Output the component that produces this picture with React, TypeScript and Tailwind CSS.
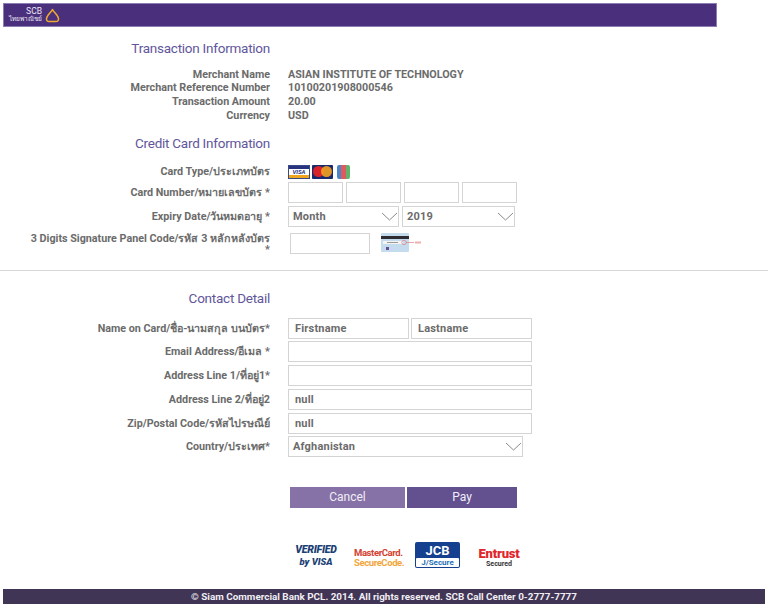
import { ReactNode } from 'react';

const font = { fontFamily: 'Roboto, "Noto Sans", "DejaVu Sans", sans-serif' };

function Heading({ children, className }: { children: ReactNode; className: string }) {
  return <h2 className={`w-[270px] text-right text-[13.5px] leading-[20px] font-normal tracking-[-0.25px] text-[#62569b] ${className}`}>{children}</h2>;
}

function Row({ label, children, className = '' }: { label: ReactNode; children?: ReactNode; className?: string }) {
  return (
    <div className={`flex items-center gap-[18px] ${className}`}>
      <label className="w-[270px] shrink-0 text-right text-[10.75px] leading-[11px] font-bold text-[#6b6b6b]">{label}</label>
      {children}
    </div>
  );
}

function Field({ value = '', className }: { value?: string; className: string }) {
  return (
    <input
      readOnly
      value={value}
      className={`h-[21px] border border-[#d4d4d4] bg-white px-[6px] text-[11px] font-bold tracking-[0.2px] text-[#6b6b6b] outline-none ${className}`}
    />
  );
}

function Select({ value, className }: { value: string; className: string }) {
  return (
    <div className={`relative flex h-[21px] items-center border border-[#d4d4d4] bg-white pt-[1px] pl-[4px] text-[11px] font-bold tracking-[0.2px] text-[#6b6b6b] ${className}`}>
      {value}
      <svg className="absolute top-[5px] right-0" width="17" height="9" viewBox="0 0 17 9" fill="none">
        <path d="M1 1l7.5 7L16 1" stroke="#8a8a8a" strokeWidth="1" />
      </svg>
    </div>
  );
}

function InfoRow({ label, value }: { label: string; value: string }) {
  return (
    <div className="flex h-[13.7px] items-center gap-[18px] text-[10.75px] font-bold text-[#6b6b6b]">
      <span className="w-[270px] text-right">{label}</span>
      <span>{value}</span>
    </div>
  );
}

function CardIcons() {
  return (
    <div className="flex items-center gap-[2px]">
      <div className="flex h-[14px] w-[22px] flex-col border border-[#3b4a86] bg-white">
        <div className="h-[3px] bg-[#27337f]" />
        <div className="flex-1 text-center text-[6px] leading-[6px] font-bold text-[#27337f] italic">VISA</div>
        <div className="h-[3px] bg-[#eda51f]" />
      </div>
      <div className="relative h-[14px] w-[21px] rounded-[1px] bg-[#1b2a6b]">
        <div className="absolute top-[1.5px] left-[1px] size-[11px] rounded-full bg-[#d8232a]" />
        <div className="absolute top-[1.5px] right-[1px] size-[11px] rounded-full bg-[#f4a11f] opacity-90" />
      </div>
      <div className="ml-[2px] flex h-[14px] w-[13px] overflow-hidden rounded-[2px]">
        <div className="flex-1 bg-[#4a86c5]" />
        <div className="flex-1 bg-[#de5a60]" />
        <div className="flex-1 bg-[#5fb36b]" />
      </div>
    </div>
  );
}

function CardBack() {
  return (
    <svg width="46" height="20" viewBox="0 0 46 20" className="ml-[11px]">
      <rect x="0" y="0" width="28" height="19" rx="1" fill="#c5dcef" />
      <rect x="0" y="3" width="28" height="3" fill="#2d2d33" />
      <rect x="2" y="8" width="20" height="3" fill="#f4f4f4" />
      <rect x="6" y="9" width="11" height="1" fill="#9a9a9a" />
      <rect x="5" y="14" width="3" height="3" fill="#6a4a9c" />
      <circle cx="23" cy="9.500" r="2.200" fill="none" stroke="#e28080" strokeWidth="0.7" />
      <path d="M25 9.500h8" stroke="#e28080" strokeWidth="0.7" />
      <rect x="34" y="8.500" width="6" height="2" fill="#eeb0b0" />
    </svg>
  );
}

function TrustLogos() {
  return (
    <div className="mt-[34px] ml-[294px] flex h-[26px] items-center">
      <div className="w-[44px] text-center font-black text-[#1c3f75] italic">
        <div className="text-[10.5px] leading-[13px] tracking-[-0.2px]">VERIFIED</div>
        <div className="text-[9.5px] leading-[11px]">by VISA</div>
      </div>
      <div className="ml-[16px] w-[44px] pt-[5px] text-center text-[9.5px] leading-[10px] font-bold tracking-[-0.4px] whitespace-nowrap">
        <div className="text-[#d3402f]">MasterCard.</div>
        <div className="text-[#f2a63c]">SecureCode.</div>
      </div>
      <div className="ml-[17px] flex h-[26px] w-[45px] flex-col rounded-[2px] bg-[#14408f] p-[1px] text-center font-bold">
        <div className="text-[13px] leading-[15px] text-white">JCB</div>
        <div className="flex-1 rounded-[1px] bg-white text-[8px] leading-[9px] text-[#1e6fb8]">J/Secure</div>
      </div>
      <div className="ml-[17px] w-[44px] pt-[5px] text-center">
        <div className="text-[13px] leading-[13px] font-black tracking-[-0.2px] text-[#e0252b]">Entrust</div>
        <div className="text-[7px] leading-[8px] font-bold text-[#333]">Secured</div>
      </div>
    </div>
  );
}

export default function App() {
  return (
    <div className="h-[607px] w-[768px] overflow-hidden bg-white pt-[3px]" style={font}>
      <header className="mx-[3px] flex h-[24px] w-[714px] items-center border border-[#8d7db5] bg-[#4a2f7d] pl-[3px]">
        <div className="ml-[2px] text-right leading-none text-[#ece8f3]">
          <div className="text-[8.5px] leading-[8px]">SCB</div>
          <div className="text-[6.5px] leading-[8px]">ไทยพาณิชย์</div>
        </div>
        <svg width="15" height="15" viewBox="0 0 15 15" fill="none" className="ml-[3px]">
          <path d="M7.5 1.500C6.500 4 2 7 1.500 10.500 1.200 12.500 2.500 13.500 4 13.500h7c1.500 0 2.800-1 2.500-3C13 7 8.500 4 7.500 1.500Z" stroke="#ecaa30" strokeWidth="1.500" strokeLinejoin="round" />
        </svg>
      </header>

      <Heading className="mt-[11px]">Transaction Information</Heading>
      <div className="mt-[10px]">
        <InfoRow label="Merchant Name" value="ASIAN INSTITUTE OF TECHNOLOGY" />
        <InfoRow label="Merchant Reference Number" value="10100201908000546" />
        <InfoRow label="Transaction Amount" value="20.00" />
        <InfoRow label="Currency" value="USD" />
      </div>

      <Heading className="mt-[10px]">Credit Card Information</Heading>
      <Row label="Card Type/ประเภทบัตร" className="mt-[12px] h-[14px]">
        <CardIcons />
      </Row>
      <Row label="Card Number/หมายเลขบัตร *" className="mt-[3px]">
        <div className="flex gap-[3px]">
          <Field className="w-[55px]" />
          <Field className="w-[55px]" />
          <Field className="w-[55px]" />
          <Field className="w-[55px]" />
        </div>
      </Row>
      <Row label="Expiry Date/วันหมดอายุ *" className="mt-[3px]">
        <div className="flex gap-[3px]">
          <Select value="Month" className="w-[111px]" />
          <Select value="2019" className="w-[113px]" />
        </div>
      </Row>
      <div className="mt-[6px] flex items-start gap-[18px]">
        <label className="ml-[28px] w-[242px] shrink-0 text-right text-[10.75px] leading-[11px] font-bold text-[#6b6b6b]">
          3 Digits Signature Panel Code/รหัส 3 หลักหลังบัตร *
        </label>
        <div className="flex items-start">
          <Field className="ml-[2px] w-[80px]" />
          <CardBack />
        </div>
      </div>

      <hr className="mt-[15px] border-[#d9d9d9]" />

      <Heading className="mt-[17px]">Contact Detail</Heading>
      <div className="mt-[10px] flex flex-col gap-[2.7px]">
        <Row label="Name on Card/ชื่อ-นามสกุล บนบัตร*">
          <div className="flex gap-[2px]">
            <Field value="Firstname" className="w-[121px]" />
            <Field value="Lastname" className="w-[121px]" />
          </div>
        </Row>
        <Row label="Email Address/อีเมล *">
          <Field className="w-[244px]" />
        </Row>
        <Row label="Address Line 1/ที่อยู่1*">
          <Field className="w-[244px]" />
        </Row>
        <Row label="Address Line 2/ที่อยู่2">
          <Field value="null" className="w-[244px]" />
        </Row>
        <Row label="Zip/Postal Code/รหัสไปรษณีย์">
          <Field value="null" className="w-[244px]" />
        </Row>
        <Row label="Country/ประเทศ*">
          <Select value="Afghanistan" className="w-[235px]" />
        </Row>
      </div>

      <div className="mt-[30px] ml-[290px] flex gap-[2px] text-[12px] leading-[21px] text-[#f1eef6]">
        <button className="h-[21px] w-[115px] bg-[#8672a6]">Cancel</button>
        <button className="h-[21px] w-[110px] bg-[#62508f]">Pay</button>
      </div>

      <TrustLogos />

      <footer className="mx-[3px] mt-[21px] h-[15px] w-[762px] bg-[#413555] text-center text-[9.9px] leading-[15px] font-bold text-[#f0eef3]">
        © Siam Commercial Bank PCL. 2014. All rights reserved. SCB Call Center 0-2777-7777
      </footer>
    </div>
  );
}
